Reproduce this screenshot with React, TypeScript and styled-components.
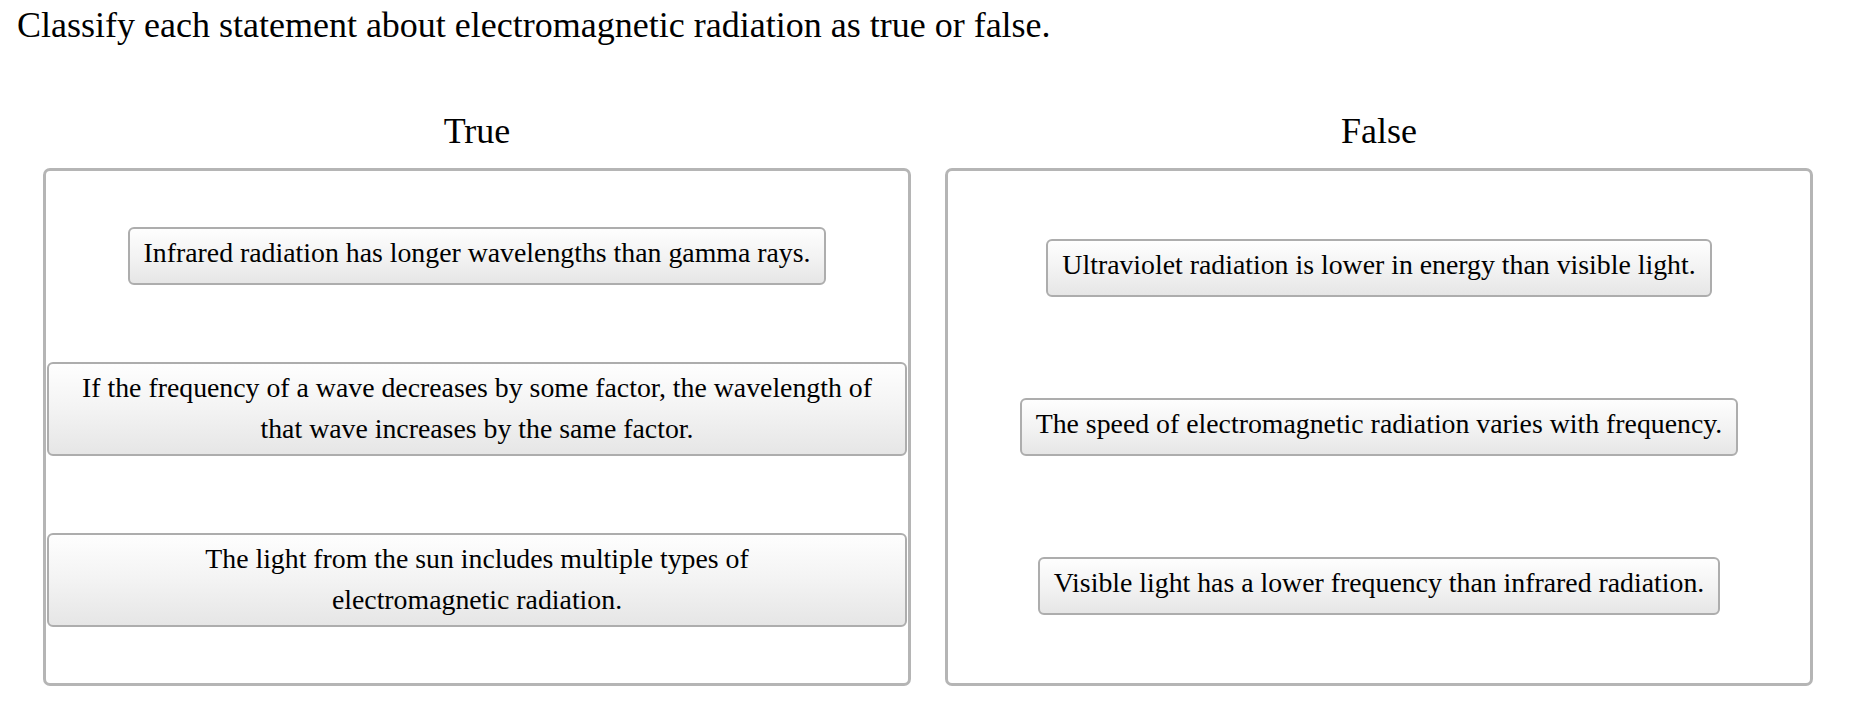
import React from "react";
import styled, { createGlobalStyle } from "styled-components";

const GlobalStyle = createGlobalStyle`
  html, body {
    margin: 0;
    padding: 0;
    background: #ffffff;
  }
  body {
    font-family: "Liberation Serif", "Times New Roman", Times, serif;
    color: #000000;
  }
`;

const Page = styled.main`
  display: flex;
  flex-direction: column;
  padding: 5px 41px 0 43px;
`;

const Prompt = styled.h1`
  margin: 0 0 0 -26px;
  font-size: 36px;
  line-height: 41px;
  font-weight: 400;
`;

const Columns = styled.div`
  display: grid;
  grid-template-columns: 1fr 1fr;
  column-gap: 34px;
  margin-top: 65px;
`;

const Column = styled.section`
  display: flex;
  flex-direction: column;
`;

const Heading = styled.h2`
  margin: 0 0 16px;
  text-align: center;
  font-size: 36px;
  line-height: 41px;
  font-weight: 400;
`;

const DropZone = styled.div`
  box-sizing: border-box;
  height: 518px;
  display: flex;
  flex-direction: column;
  justify-content: space-around;
  align-items: center;
  padding: 18px 1px;
  border: 3px solid #b5b5b5;
  border-radius: 7px;
`;

const Card = styled.div`
  box-sizing: border-box;
  display: flex;
  align-items: flex-start;
  justify-content: center;
  max-width: 100%;
  min-height: 58px;
  padding: 3px 14px 5px;
  border: 2px solid #adadad;
  border-radius: 6px;
  background: linear-gradient(to bottom, #fefefe 0%, #f3f3f3 50%, #e6e6e6 100%);
  font-size: 27.8px;
  line-height: 41px;
  text-align: center;
`;

const Keep = styled.span`
  white-space: nowrap;
`;

type Statement = { id: string; text: React.ReactNode };

const trueItems: Statement[] = [
  { id: "t1", text: "Infrared radiation has longer wavelengths than gamma rays." },
  {
    id: "t2",
    text: "If the frequency of a wave decreases by some factor, the wavelength of that wave increases by the same factor.",
  },
  {
    id: "t3",
    text: (
      <>
        The light from the sun includes multiple types of <Keep>electromagnetic radiation.</Keep>
      </>
    ),
  },
];

const falseItems: Statement[] = [
  { id: "f1", text: "Ultraviolet radiation is lower in energy than visible light." },
  { id: "f2", text: "The speed of electromagnetic radiation varies with frequency." },
  { id: "f3", text: "Visible light has a lower frequency than infrared radiation." },
];

function Bin({ title, items }: { title: string; items: Statement[] }) {
  return (
    <Column>
      <Heading>{title}</Heading>
      <DropZone>
        {items.map((item) => (
          <Card key={item.id}>
            <span>{item.text}</span>
          </Card>
        ))}
      </DropZone>
    </Column>
  );
}

export default function App() {
  return (
    <>
      <GlobalStyle />
      <Page>
        <Prompt>Classify each statement about electromagnetic radiation as true or false.</Prompt>
        <Columns>
          <Bin title="True" items={trueItems} />
          <Bin title="False" items={falseItems} />
        </Columns>
      </Page>
    </>
  );
}
